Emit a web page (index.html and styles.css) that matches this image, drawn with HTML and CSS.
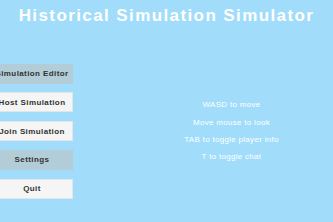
FILE: index.html
```html
<!DOCTYPE html>
<html lang="en">
<head>
    <meta charset="UTF-8">
    <meta name="viewport" content="width=device-width, initial-scale=1.0">
    <title>Historical Simulation Simulator</title>
    <link rel="stylesheet" href="styles.css">
</head>
<body>
    <h1 class="title">Historical Simulation Simulator</h1>

    <div class="main">
        <div class="menu">
            <button class="btn btn-dim">Simulation Editor</button>
            <button class="btn">Host Simulation</button>
            <button class="btn">Join Simulation</button>
            <button class="btn btn-dim">Settings</button>
            <button class="btn">Quit</button>
        </div>

        <div class="help">
            <p>WASD to move</p>
            <p>Move mouse to look</p>
            <p>TAB to toggle player info</p>
            <p>T to toggle chat</p>
        </div>
    </div>
</body>
</html>
```

FILE: styles.css
```css
body {
    font-family: 'Liberation Sans', Arial, sans-serif;
    background-color: #a1ddfb;
    margin: 0;
    width: 333px;
    height: 222px;
    overflow: hidden;
}

.title {
    margin: 0;
    padding-top: 6px;
    font-size: 17px;
    line-height: 20px;
    letter-spacing: 1.4px;
    font-weight: bold;
    color: white;
    text-align: center;
}

.main {
    display: flex;
    align-items: center;
    height: 142px;
    margin-top: 34px;
}

.menu {
    display: flex;
    flex-direction: column;
    gap: 8.75px;
    width: 82px;
    margin-left: -9px;
}

.btn {
    height: 20px;
    padding: 0;
    border: 1px solid #e2e6e8;
    background-color: #f5f5f5;
    color: #333;
    font-family: inherit;
    font-size: 8px;
    font-weight: bold;
    letter-spacing: 0.4px;
}

.btn-dim {
    background-color: #b2cdd8;
    border-color: #b2cdd8;
}

.help {
    flex: 1;
    margin-left: 57px;
    text-align: center;
    color: white;
    font-size: 8px;
    letter-spacing: 0.3px;
}

.help p {
    margin: 0;
    line-height: 17.3px;
}
```
